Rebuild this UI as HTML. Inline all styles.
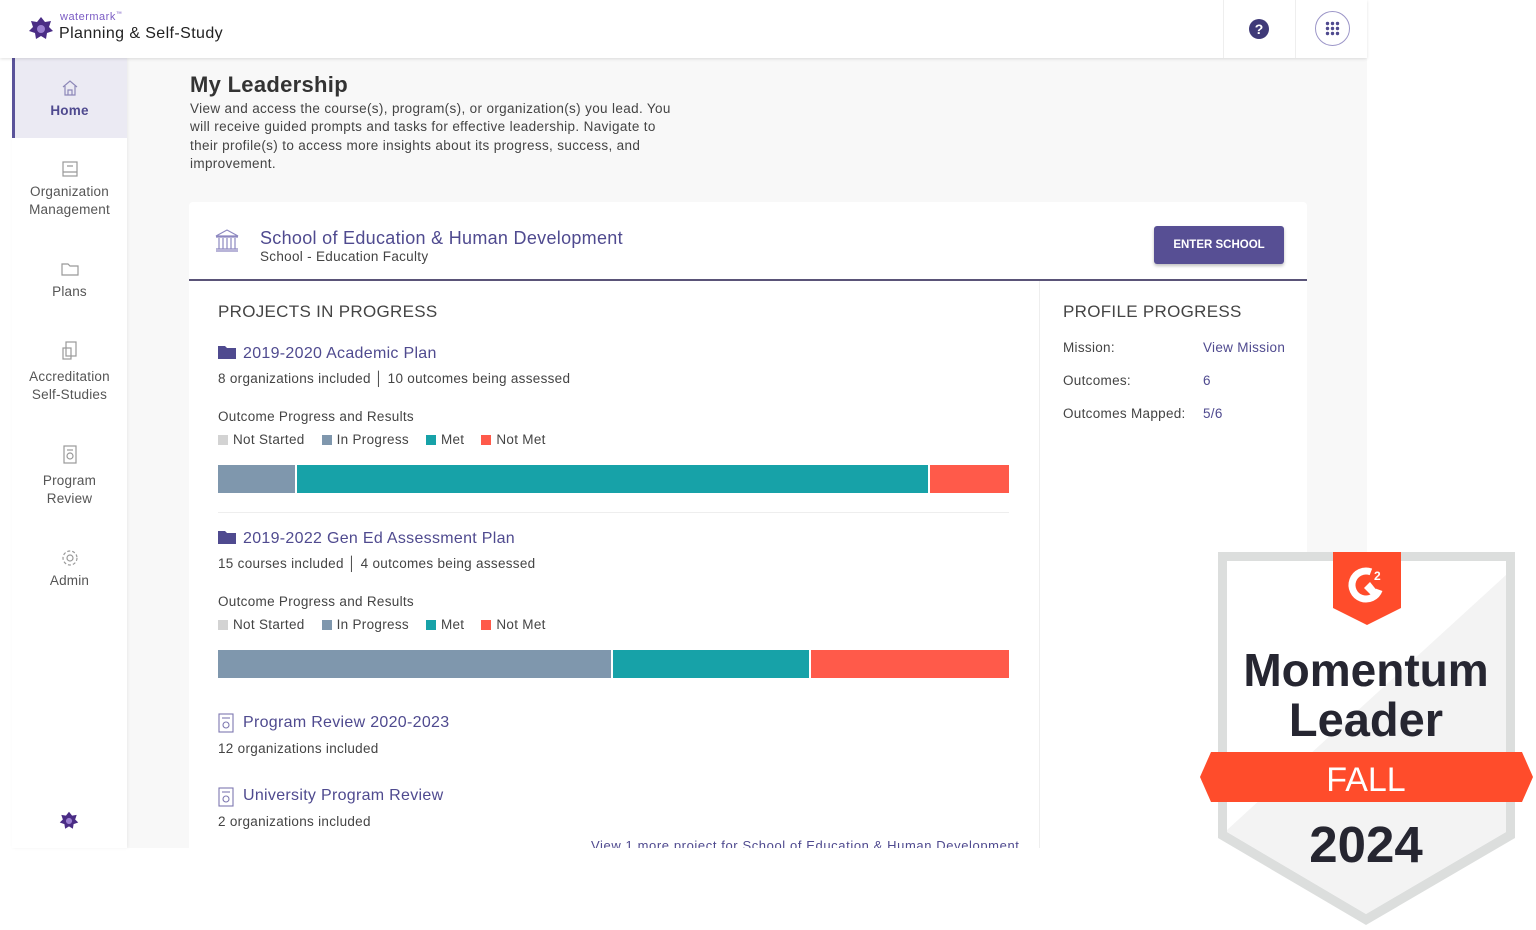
<!DOCTYPE html>
<html><head><meta charset="utf-8"><style>
*{margin:0;padding:0;box-sizing:border-box}
body{width:1536px;height:930px;background:#fff;font-family:"Liberation Sans",sans-serif;position:relative;overflow:hidden;color:#333}
.abs{position:absolute}
.top{left:0;top:0;width:1367px;height:58px;background:#fff;box-shadow:0 1px 3px rgba(0,0,0,.12);z-index:2}
.main{left:127px;top:58px;width:1240px;height:790px;background:#f8f8f8}
.side{left:12px;top:58px;width:115px;height:790px;background:#fff;box-shadow:1px 0 3px rgba(0,0,0,.06)}
.nav{position:absolute;left:0;width:115px;text-align:center;font-size:13.5px;color:#555;line-height:18px;letter-spacing:.2px}
.nav svg{display:block;margin:0 auto 4px}
.card{left:189px;top:202px;width:1118px;height:646px;background:#fff;border-radius:4px 4px 0 0}
.link{color:#4f4a8f;letter-spacing:.3px}
.sm{font-size:13.5px;color:#444;letter-spacing:.3px}
.leg span{display:inline-block;width:10px;height:10px;margin-right:5px;vertical-align:-1px}
.leg b{display:inline-block;width:17px}
</style></head><body>
<div class="abs top">
 <svg class="abs" style="left:28px;top:15px" width="26" height="28" viewBox="0 0 26 28"><path d="M13 2l4 5 6-1-2 6 4 4-6 2-1 6-5-3-5 3-1-6-6-2 4-4-2-6 6 1z" fill="#4a2c85"/><circle cx="13" cy="14" r="4" fill="#9b7fd1"/></svg>
 <div class="abs" style="left:60px;top:11px;font-size:11px;color:#7b5cc4;letter-spacing:.5px">watermark<sup style="font-size:6px">™</sup></div>
 <div class="abs" style="left:59px;top:25px;font-size:16px;color:#222;letter-spacing:.4px">Planning &amp; Self-Study</div>
 <div class="abs" style="left:1223px;top:0;width:1px;height:58px;background:#eee"></div>
 <div class="abs" style="left:1295px;top:0;width:1px;height:58px;background:#eee"></div>
 <div class="abs" style="left:1249px;top:19px;width:20px;height:20px;border-radius:50%;background:#3f3a78;color:#fff;font-weight:bold;font-size:14px;text-align:center;line-height:20px">?</div>
 <div class="abs" style="left:1315px;top:11px;width:35px;height:35px;border-radius:50%;border:1.5px solid #9c96c8">
  <svg class="abs" style="left:9px;top:9px" width="15" height="15" viewBox="0 0 15 15" fill="#4f4a8f"><circle cx="2.5" cy="2.5" r="1.7"/><circle cx="7.5" cy="2.5" r="1.7"/><circle cx="12.5" cy="2.5" r="1.7"/><circle cx="2.5" cy="7.5" r="1.7"/><circle cx="7.5" cy="7.5" r="1.7"/><circle cx="12.5" cy="7.5" r="1.7"/><circle cx="2.5" cy="12.5" r="1.7"/><circle cx="7.5" cy="12.5" r="1.7"/><circle cx="12.5" cy="12.5" r="1.7"/></svg>
 </div>
</div>
<div class="abs main"></div>
<div class="abs side">
 <div class="abs" style="left:0;top:0;width:115px;height:80px;background:#ebeaf3;border-left:3px solid #5a539a"></div>
 <div class="nav" style="top:20px;color:#4f4a8f;font-weight:bold"><svg width="20" height="20" viewBox="0 0 20 20" fill="none" stroke="#8d88b8" stroke-width="1.2"><path d="M3 9l7-6 7 6M5 8v9h10V8M8 17v-5h4v5"/></svg>Home</div>
 <div class="nav" style="top:101px"><svg width="20" height="20" viewBox="0 0 20 20" fill="none" stroke="#999" stroke-width="1.2"><rect x="3" y="3" width="14" height="14"/><path d="M3 13h14M7 7h6"/></svg>Organization<br>Management</div>
 <div class="nav" style="top:201px"><svg width="20" height="20" viewBox="0 0 20 20" fill="none" stroke="#999" stroke-width="1.2"><path d="M2 5h6l2 2h8v9H2z"/></svg>Plans</div>
 <div class="nav" style="top:282px"><svg width="20" height="24" viewBox="0 0 20 24" fill="none" stroke="#999" stroke-width="1.2"><rect x="6" y="2" width="10" height="14"/><rect x="3" y="8" width="8" height="11"/></svg>Accreditation<br>Self-Studies</div>
 <div class="nav" style="top:386px"><svg width="20" height="24" viewBox="0 0 20 24" fill="none" stroke="#999" stroke-width="1.2"><rect x="4" y="2" width="12" height="17"/><circle cx="10" cy="12" r="3"/><path d="M7 6h6"/></svg>Program<br>Review</div>
 <div class="nav" style="top:490px"><svg width="20" height="20" viewBox="0 0 20 20" fill="none" stroke="#999" stroke-width="1.2"><circle cx="10" cy="10" r="3"/><circle cx="10" cy="10" r="7" stroke-dasharray="3 2"/></svg>Admin</div>
 <svg class="abs" style="left:47px;top:752px" width="20" height="22" viewBox="0 0 26 28"><path d="M13 2l4 5 6-1-2 6 4 4-6 2-1 6-5-3-5 3-1-6-6-2 4-4-2-6 6 1z" fill="#4a2c85"/><circle cx="13" cy="14" r="4" fill="#9b7fd1"/></svg>
</div>
<div class="abs" style="left:190px;top:72px;font-size:22px;font-weight:bold;color:#333;letter-spacing:.3px">My Leadership</div>
<div class="abs" style="left:190px;top:100px;width:492px;font-size:13.5px;line-height:18.3px;color:#444;letter-spacing:.35px">View and access the course(s), program(s), or organization(s) you lead. You will receive guided prompts and tasks for effective leadership. Navigate to their profile(s) to access more insights about its progress, success, and improvement.</div>
<div class="abs card">
 <svg class="abs" style="left:25px;top:27px" width="26" height="24" viewBox="0 0 26 24" fill="none" stroke="#8d88c0" stroke-width="1.2"><path d="M2 7L13 1l11 6zM2 8h22M2 22h22M2 20h22"/><path d="M5 9v11M9 9v11M13 9v11M17 9v11M21 9v11"/></svg>
 <div class="abs link" style="left:71px;top:26px;font-size:18px">School of Education &amp; Human Development</div>
 <div class="abs sm" style="left:71px;top:47px">School - Education Faculty</div>
 <div class="abs" style="left:965px;top:24px;width:130px;height:38px;background:#574f94;border-radius:3px;color:#fff;font-size:11.5px;font-weight:bold;text-align:center;line-height:38px;box-shadow:0 2px 3px rgba(0,0,0,.25)">ENTER SCHOOL</div>
 <div class="abs" style="left:0;top:77px;width:1118px;height:1.5px;background:#5a5478"></div>
 <div class="abs" style="left:850px;top:79px;width:1px;height:567px;background:#eee"></div>
 <div class="abs" style="left:29px;top:100px;font-size:17px;color:#444;letter-spacing:.3px">PROJECTS IN PROGRESS</div>
 <div class="abs" style="left:874px;top:100px;font-size:17px;color:#444;letter-spacing:.3px">PROFILE PROGRESS</div>
 <div class="abs sm" style="left:874px;top:138px">Mission:</div><div class="abs link" style="left:1014px;top:138px;font-size:13.5px">View Mission</div>
 <div class="abs sm" style="left:874px;top:171px">Outcomes:</div><div class="abs link" style="left:1014px;top:171px;font-size:13.5px">6</div>
 <div class="abs sm" style="left:874px;top:204px">Outcomes Mapped:</div><div class="abs link" style="left:1014px;top:204px;font-size:13.5px">5/6</div>

 <svg class="abs" style="left:29px;top:143px" width="18" height="14" viewBox="0 0 18 14"><path d="M0 1h7l2 2h9v11H0z" fill="#4f4a8f"/></svg>
 <div class="abs link" style="left:54px;top:143px;font-size:16px">2019-2020 Academic Plan</div>
 <div class="abs sm" style="left:29px;top:169px">8 organizations included │ 10 outcomes being assessed</div>
 <div class="abs sm" style="left:29px;top:207px">Outcome Progress and Results</div>
 <div class="abs sm leg" style="left:29px;top:230px"><span style="background:#d3d3d3"></span>Not Started<b></b><span style="background:#7f97ad"></span>In Progress<b></b><span style="background:#17a2a8"></span>Met<b></b><span style="background:#ff5a4a"></span>Not Met</div>
 <div class="abs" style="left:29px;top:263px;width:77px;height:28px;background:#7f97ad"></div>
 <div class="abs" style="left:108px;top:263px;width:631px;height:28px;background:#17a2a8"></div>
 <div class="abs" style="left:741px;top:263px;width:79px;height:28px;background:#ff5a4a"></div>
 <div class="abs" style="left:29px;top:310px;width:791px;height:1px;background:#eee"></div>

 <svg class="abs" style="left:29px;top:328px" width="18" height="14" viewBox="0 0 18 14"><path d="M0 1h7l2 2h9v11H0z" fill="#4f4a8f"/></svg>
 <div class="abs link" style="left:54px;top:328px;font-size:16px">2019-2022 Gen Ed Assessment Plan</div>
 <div class="abs sm" style="left:29px;top:354px">15 courses included │ 4 outcomes being assessed</div>
 <div class="abs sm" style="left:29px;top:392px">Outcome Progress and Results</div>
 <div class="abs sm leg" style="left:29px;top:415px"><span style="background:#d3d3d3"></span>Not Started<b></b><span style="background:#7f97ad"></span>In Progress<b></b><span style="background:#17a2a8"></span>Met<b></b><span style="background:#ff5a4a"></span>Not Met</div>
 <div class="abs" style="left:29px;top:448px;width:393px;height:28px;background:#7f97ad"></div>
 <div class="abs" style="left:424px;top:448px;width:196px;height:28px;background:#17a2a8"></div>
 <div class="abs" style="left:622px;top:448px;width:198px;height:28px;background:#ff5a4a"></div>

 <svg class="abs" style="left:29px;top:511px" width="16" height="20" viewBox="0 0 16 20" fill="none" stroke="#7d78b0" stroke-width="1.1"><rect x="1" y="1" width="14" height="18"/><circle cx="8" cy="12" r="3"/><path d="M4 5h8"/></svg>
 <div class="abs link" style="left:54px;top:512px;font-size:16px">Program Review 2020-2023</div>
 <div class="abs sm" style="left:29px;top:539px">12 organizations included</div>
 <svg class="abs" style="left:29px;top:585px" width="16" height="20" viewBox="0 0 16 20" fill="none" stroke="#7d78b0" stroke-width="1.1"><rect x="1" y="1" width="14" height="18"/><circle cx="8" cy="12" r="3"/><path d="M4 5h8"/></svg>
 <div class="abs link" style="left:54px;top:585px;font-size:16px">University Program Review</div>
 <div class="abs sm" style="left:29px;top:612px">2 organizations included</div>
 <div class="abs link" style="left:402px;top:636px;font-size:13px;height:10px;overflow:hidden;letter-spacing:.6px">View 1 more project for School of Education &amp; Human Development</div>
</div>
<svg class="abs" style="left:1196px;top:548px" width="340" height="382" viewBox="1196 548 340 382">
 <path d="M1218 552H1515V838L1366 925L1218 838Z" fill="#dcdedd"/>
 <path d="M1227 561H1506V832L1366 914L1227 832Z" fill="#fff"/>
 <path d="M1506 561V832L1366 914L1227 832V830L1506 575Z" fill="#f3f3f3"/>
 <path d="M1333 552H1401V608L1367 625L1333 608Z" fill="#ff4c2b"/>
 <circle cx="1366" cy="585" r="14" fill="none" stroke="#fff" stroke-width="7" stroke-dasharray="66 30" transform="rotate(20 1366 585)"/>
 <path d="M1364 588l6-6 8 10-5 5z" fill="#fff"/>
 <text x="1374" y="580" font-family="Liberation Sans" font-weight="bold" font-size="12" fill="#fff">2</text>
 <path d="M1211 752H1522L1533 777L1522 802H1211L1200 777Z" fill="#ff4c2b"/>
 <text x="1366" y="686" text-anchor="middle" font-family="Liberation Sans" font-weight="bold" font-size="46" fill="#262631">Momentum</text>
 <text x="1366" y="736" text-anchor="middle" font-family="Liberation Sans" font-weight="bold" font-size="47" fill="#262631">Leader</text>
 <text x="1366" y="791" text-anchor="middle" font-family="Liberation Sans" font-size="34" fill="#fff">FALL</text>
 <text x="1366" y="862" text-anchor="middle" font-family="Liberation Sans" font-weight="bold" font-size="51" fill="#262631">2024</text>
</svg>
</body></html>
